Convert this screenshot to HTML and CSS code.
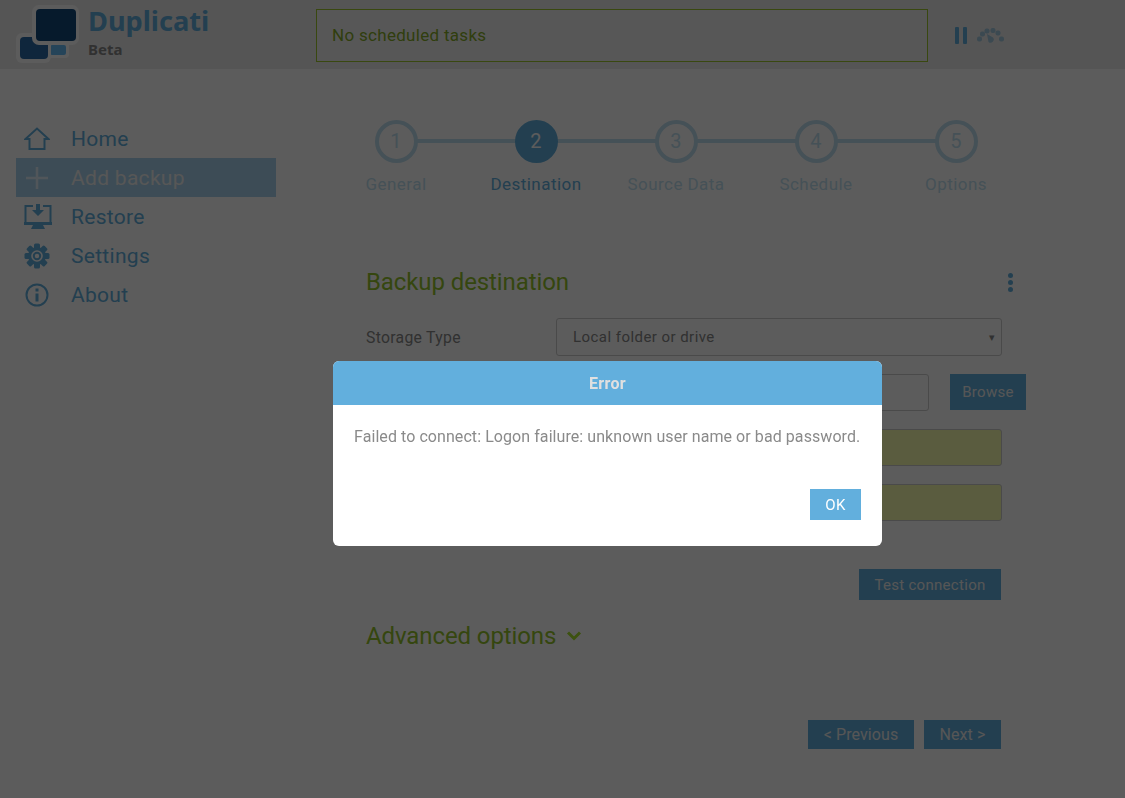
FILE: index.html
```html
<!DOCTYPE html>
<html lang="en">
<head>
<meta charset="utf-8">
<title>Duplicati</title>
<link rel="stylesheet" href="styles.css">
</head>
<body>
<header class="topbar">
  <div class="brand">
    <svg class="logo" width="62" height="60" viewBox="0 0 62 60">
      <rect x="28" y="36" width="25" height="17" rx="4" fill="#fff"/>
      <rect x="34" y="40" width="16" height="10" rx="2" fill="#68bdf7"/>
      <rect x="0" y="28" width="35" height="30" rx="6" fill="#fff"/>
      <rect x="4" y="32" width="28" height="22" rx="4" fill="#2c6aa7"/>
      <rect x="16" y="0" width="47" height="40" rx="7" fill="#fff"/>
      <rect x="20" y="4" width="40" height="32" rx="4" fill="#11487a"/>
    </svg>
    <div class="brand-text">
      <div class="brand-name">Duplicati</div>
      <div class="brand-beta">Beta</div>
    </div>
  </div>
  <div class="status">No scheduled tasks</div>
  <div class="controls">
    <svg width="12" height="17" viewBox="0 0 12 17"><rect x="0" y="0" width="4" height="17" rx="1" fill="#62afdd"/><rect x="8" y="0" width="4" height="17" rx="1" fill="#62afdd"/></svg>
    <svg width="27" height="15" viewBox="0 0 27 15" fill="#a3c9e0"><rect x="0" y="8.500" width="5" height="5" rx="2"/><rect x="3" y="3.500" width="5" height="5" rx="2"/><rect x="7.500" y="0.500" width="5" height="5" rx="2"/><rect x="13.500" y="0" width="5" height="5" rx="2"/><rect x="18.500" y="2.500" width="5" height="5" rx="2"/><rect x="22" y="8.500" width="5" height="5" rx="2"/><path d="M10 6 L16 9.500 A3.200 3.200 0 0 1 11.500 14 Z"/></svg>
  </div>
</header>

<div class="layout">
  <nav class="menu">
    <a class="menu-item">
      <svg class="menu-icon" width="26" height="24" viewBox="0 0 26 24" fill="none" stroke="#62afdd" stroke-width="2"><path d="M1.500 12 L13 1.500 L24.500 12 H20.500 V22 H5.500 V12 Z"/></svg>
      <span>Home</span>
    </a>
    <a class="menu-item active">
      <svg class="menu-icon" width="26" height="24" viewBox="0 0 26 24" fill="none" stroke="#fff" stroke-width="2.500" opacity=".65"><path d="M2 12 H24 M13 1 V23"/></svg>
      <span>Add backup</span>
    </a>
    <a class="menu-item">
      <svg class="menu-icon wide-icon" width="28" height="26" viewBox="0 0 28 26"><path d="M9 2 H1.500 V19 H26.500 V2 H19" fill="none" stroke="#62afdd" stroke-width="2"/><path d="M0 18 H28 V21 H0 Z M9 21 H19 L21 25 H7 Z M12 0 H16 V6 H20 L14 12 L8 6 H12 Z" fill="#62afdd"/></svg>
      <span>Restore</span>
    </a>
    <a class="menu-item">
      <svg class="menu-icon" width="26" height="26" viewBox="0 0 26 26"><g fill="#62afdd"><rect x="10" y="0.500" width="6" height="25" rx="1.500"/><rect x="10" y="0.500" width="6" height="25" rx="1.500" transform="rotate(45 13 13)"/><rect x="10" y="0.500" width="6" height="25" rx="1.500" transform="rotate(90 13 13)"/><rect x="10" y="0.500" width="6" height="25" rx="1.500" transform="rotate(135 13 13)"/></g><circle cx="13" cy="13" r="9" fill="#62afdd"/><circle cx="13" cy="13" r="5.800" fill="#fff"/><circle cx="13" cy="13" r="3.200" fill="none" stroke="#62afdd" stroke-width="2"/></svg>
      <span>Settings</span>
    </a>
    <a class="menu-item">
      <svg class="menu-icon" width="26" height="24" viewBox="0 0 24 24"><circle cx="12" cy="12" r="10.500" fill="none" stroke="#62afdd" stroke-width="2"/><path d="M10.500 5.500 H13.500 V8.500 H10.500 Z M10.500 10.500 H13.500 V18.500 H10.500 Z" fill="#62afdd"/></svg>
      <span>About</span>
    </a>
  </nav>

  <main class="content">
    <ol class="steps">
      <li class="step"><span class="bubble">1</span><span class="step-label">General</span></li>
      <li class="step current"><span class="bubble">2</span><span class="step-label">Destination</span></li>
      <li class="step"><span class="bubble">3</span><span class="step-label">Source Data</span></li>
      <li class="step"><span class="bubble">4</span><span class="step-label">Schedule</span></li>
      <li class="step"><span class="bubble">5</span><span class="step-label">Options</span></li>
    </ol>

    <section class="form">
      <div class="section-head">
        <h2 class="section-title">Backup destination</h2>
        <div class="kebab"><i></i><i></i><i></i></div>
      </div>
      <div class="row">
        <label class="row-label">Storage Type</label>
        <div class="select">Local folder or drive<span class="caret">▾</span></div>
      </div>
      <div class="row wide">
        <div class="row-label"></div>
        <div class="input"></div>
        <button class="btn browse">Browse</button>
      </div>
      <div class="row">
        <div class="row-label"></div>
        <div class="input filled"></div>
      </div>
      <div class="row">
        <div class="row-label"></div>
        <div class="input filled"></div>
      </div>
      <div class="test-row"><button class="btn test">Test connection</button></div>
      <h2 class="section-title advanced">Advanced options
        <svg class="chev" width="16" height="10" viewBox="0 0 16 10" fill="none" stroke="#a8e22e" stroke-width="3"><path d="M2 1.500 L8 7.500 L14 1.500"/></svg>
      </h2>
      <div class="nav-row">
        <button class="btn nav prev">&lt; Previous</button>
        <button class="btn nav next">Next &gt;</button>
      </div>
    </section>
  </main>
</div>

<div class="overlay"></div>
<div class="dialog">
  <div class="dialog-head">Error</div>
  <div class="dialog-body">
    <p class="dialog-msg">Failed to connect: Logon failure: unknown user name or bad password.</p>
    <div class="dialog-actions"><button class="dialog-ok">OK</button></div>
  </div>
</div>
</body>
</html>
```
FILE: styles.css
```css
* { box-sizing: border-box; }
html, body { height: 100%; }
body {
  margin: 0;
  background: #fff;
  font-family: "Roboto", "Liberation Sans", sans-serif;
  font-size: 15px;
  color: #444;
  overflow: hidden;
  letter-spacing: .3px;
}
.topbar {
  height: 69px;
  background: #ececec;
  display: flex;
  align-items: flex-start;
}
.brand { display: flex; width: 316px; padding: 5px 0 0 16px; }
.logo { flex: none; overflow: visible; }
.brand-text { margin-left: 10px; padding-top: 1px; }
.brand-name { font: 700 27.200px/30px "Noto Sans", sans-serif; color: #62afdd; letter-spacing: 0; }
.brand-beta { font: 700 15px/18px "Noto Sans", sans-serif; color: #888; margin-top: 4px; letter-spacing: 0; }
.status {
  width: 612px;
  height: 53px;
  margin-top: 9px;
  padding-left: 15px;
  background: #f2f2f2;
  border: 1px solid #9fc82e;
  color: #85ab28;
  font-size: 17px;
  line-height: 51px;
}
.controls { display: flex; align-items: center; gap: 10px; margin: 27px 0 0 27px; }
.layout { display: flex; }
.menu { width: 326px; padding: 50px 50px 0 16px; flex: none; }
.menu-item {
  display: flex;
  align-items: center;
  height: 39px;
  padding-left: 8px;
  color: #62afdd;
  font-size: 21px;
}
.menu-item span { margin-left: 21px; }
.menu-icon { flex: none; width: 26px; }
.wide-icon { width: 28px; margin-right: -2px; }
.menu-item.active { background: #a8d3ee; color: #f0f0f0; }
.content { width: 700px; flex: none; }
.steps {
  list-style: none;
  margin: 51px 0 0;
  padding: 0;
  display: grid;
  grid-template-columns: repeat(5, 140px);
}
.step { position: relative; display: flex; flex-direction: column; align-items: center; }
.step:not(:last-child)::after {
  content: "";
  position: absolute;
  top: 19px;
  left: 70px;
  width: 140px;
  height: 4px;
  background: #c0dff0;
}
.bubble {
  position: relative;
  z-index: 1;
  width: 43px;
  height: 43px;
  padding-bottom: 2px;
  border-radius: 50%;
  border: 4px solid #c0dff0;
  background: #fff;
  color: #c0dff0;
  display: flex;
  align-items: center;
  justify-content: center;
  font-size: 20px;
}
.step-label { margin-top: 11px; font-size: 17px; line-height: 20px; color: #c0dff0; letter-spacing: .45px; }
.current .bubble { background: #62afdd; border-color: #62afdd; color: #fff; }
.current .step-label { color: #62afdd; }
.form { padding-left: 40px; margin-top: 72px; }
.section-head { display: flex; align-items: center; justify-content: space-between; height: 32px; padding-right: 13px; }
.section-title { margin: 0; font-weight: 400; font-size: 24px; line-height: 32px; color: #93c32c; letter-spacing: -.1px; }
.kebab { display: flex; flex-direction: column; gap: 2px; }
.kebab i { display: block; width: 5px; height: 5px; border-radius: 50%; background: #62afdd; }
.row { display: flex; align-items: center; width: 636px; margin-top: 18px; }
.section-head + .row { margin-top: 20px; }
.row.wide { width: 660px; }
.row-label { width: 190px; flex: none; font-size: 15.750px; color: #888; }
.select, .input {
  flex: 1;
  height: 37px;
  border: 1px solid #ccc;
  border-radius: 3px;
  background: #fff;
}
.select {
  height: 38px;
  display: flex;
  align-items: center;
  justify-content: space-between;
  padding: 0 6px 0 16px;
  color: #888;
  letter-spacing: .45px;
}
.caret { font-size: 11px; }
.input.filled { background: #f8ffb0; }
.row.wide .input { flex: none; width: 373px; }
.btn {
  border: 0;
  padding: 0;
  background: #62afdd;
  color: #eee;
  font: inherit;
  letter-spacing: inherit;
}
.browse { width: 76px; height: 36px; margin-left: 21px; align-self: flex-start; }
.test-row { display: flex; justify-content: flex-end; width: 635px; margin-top: 48px; }
.test { width: 142px; height: 31px; }
.advanced { margin-top: 20px; display: flex; align-items: center; gap: 10px; }
.nav-row { display: flex; justify-content: flex-end; gap: 10px; width: 635px; margin-top: 68px; }
.nav { height: 29px; font-size: 16px; letter-spacing: .1px; }
.prev { width: 106px; }
.next { width: 77px; }
.overlay {
  position: fixed;
  inset: 0;
  z-index: 10;
  background: rgba(0, 0, 0, .64);
}
.dialog {
  position: absolute;
  z-index: 11;
  left: 333px;
  top: 361px;
  width: 549px;
  height: 185px;
  background: #fff;
  border-radius: 6px;
  overflow: hidden;
}
.dialog-head {
  height: 44px;
  background: #62afdd;
  color: #e0e0e0;
  text-align: center;
  font-weight: 700;
  font-size: 16px;
  line-height: 45px;
}
.dialog-body { padding: 23px 21px 0; }
.dialog-msg { margin: 0; font-size: 16px; letter-spacing: .07px; line-height: 18px; color: #8a8a8a; }
.dialog-actions { display: flex; justify-content: flex-end; margin-top: 43px; }
.dialog-ok {
  width: 51px;
  height: 31px;
  border: 0;
  background: #62afdd;
  color: #fff;
  font: inherit;
  letter-spacing: inherit;
}
```
